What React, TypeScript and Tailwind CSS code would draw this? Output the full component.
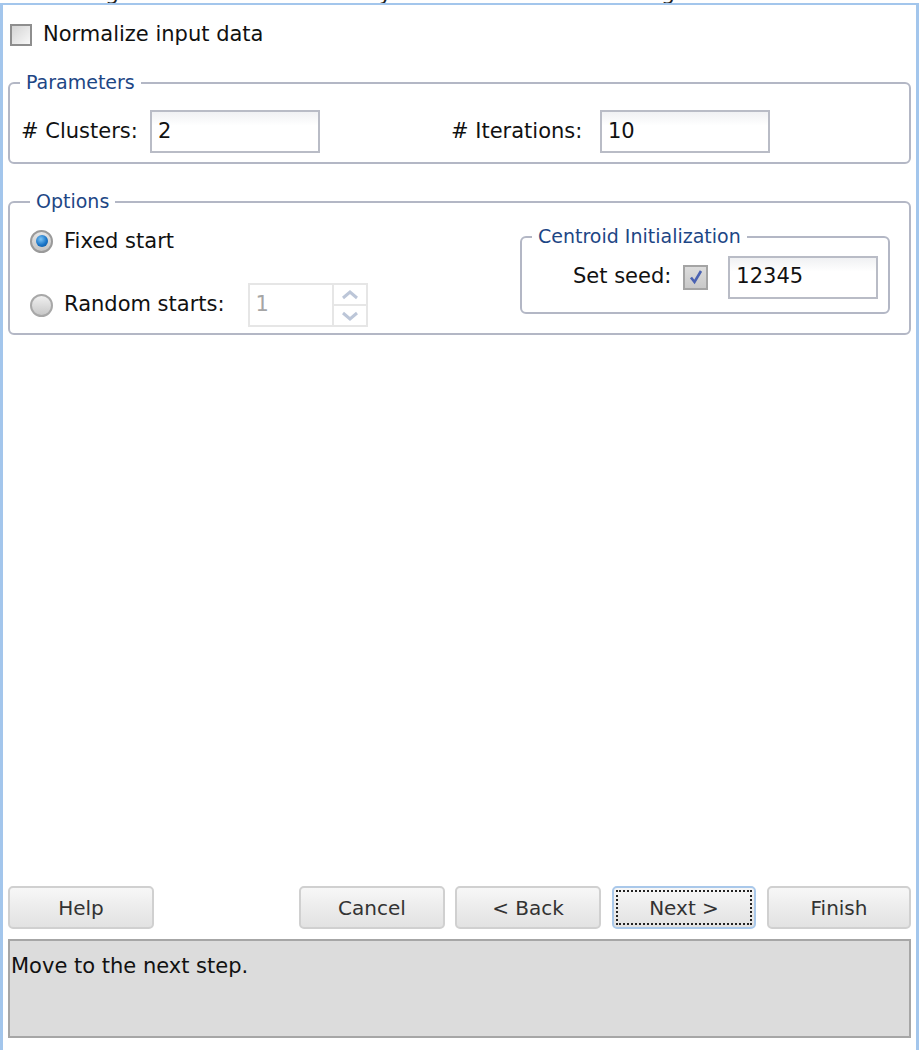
import React from "react";

const font = "font-['DejaVu_Sans','Liberation_Sans',sans-serif]";

function Input({ value, w }: { value: string; w: string }) {
  return (
    <div
      className={`${w} h-[43px] border-2 border-[#b9bcc6] bg-gradient-to-b from-[#f0f1f3] to-white to-[35%] flex items-center px-[6px] text-[21px] text-[#111]`}
    >
      {value}
    </div>
  );
}

function Group({
  label,
  className,
  labelClass,
  children,
}: {
  label: string;
  className?: string;
  labelClass?: string;
  children: React.ReactNode;
}) {
  return (
    <div className={`relative border-2 border-[#b3b7c5] rounded-[6px] ${className ?? ""}`}>
      <div
        className={`absolute -top-[14px] ${labelClass ?? "left-[10px]"} bg-white px-[6px] text-[19px] leading-[24px] text-[#1d4685]`}
      >
        {label}
      </div>
      {children}
    </div>
  );
}

function Button({
  label,
  focused,
  className,
}: {
  label: string;
  focused?: boolean;
  className: string;
}) {
  return (
    <div
      className={`${className} h-[43px] rounded-[5px] border-2 ${
        focused ? "border-[#a9c8ea]" : "border-[#d0d0d0]"
      } bg-gradient-to-b from-[#f7f7f7] via-[#ececec] to-[#e2e2e2] flex items-center justify-center p-[2px]`}
    >
      <div
        className={`w-full h-full flex items-center justify-center text-[20px] text-[#333] ${
          focused ? "border-2 border-dotted border-[#222]" : ""
        }`}
      >
        {label}
      </div>
    </div>
  );
}

export default function App() {
  return (
    <div className={`w-[919px] h-[1050px] bg-white overflow-hidden flex flex-col ${font}`}>
      <div className="h-[3px] overflow-hidden flex text-[22px] leading-[22px] text-[#222]">
        <span className="ml-[105px] -mt-[18px]">g</span>
        <span className="ml-[260px] -mt-[18px]">y</span>
        <span className="ml-[269px] -mt-[18px]">g</span>
      </div>
      <div className="flex-1 flex flex-col border-t-2 border-l-[3px] border-r-[3px] border-[#a3c6ec] px-[5px]">
        <div className="flex items-center mt-[14px] ml-[2px] gap-[11px]">
          <div className="w-[22px] h-[22px] border-2 border-[#8e8e8e] bg-gradient-to-br from-[#d4d4d4] to-[#f8f8f8]" />
          <span className="text-[21px] text-[#111]">Normalize input data</span>
        </div>

        <Group label="Parameters" className="mt-[31px] h-[82px] w-[903px]">
          <div className="flex items-center h-full pt-[18px] pl-[11px]">
            <span className="text-[21px] text-[#111] w-[129px]">#&nbsp;Clusters:</span>
            <Input value="2" w="w-[170px]" />
            <span className="text-[21px] text-[#111] ml-[131px] w-[149px]">#&nbsp;Iterations:</span>
            <Input value="10" w="w-[170px]" />
          </div>
        </Group>

        <Group label="Options" labelClass="left-[20px]" className="mt-[37px] h-[134px] w-[903px]">
          <div className="flex h-full">
            <div className="flex flex-col pl-[20px] pt-[23px]">
              <div className="flex items-center gap-[11px]">
                <div className="w-[23px] h-[23px] rounded-full border-2 border-[#9a9a9a] bg-gradient-to-b from-[#e6e6e6] to-[#c4c4c4] flex items-center justify-center">
                  <div className="w-[12px] h-[12px] rounded-full bg-[radial-gradient(circle_at_40%_35%,#7cc4f4,#1a75c8_55%,#0b4f93)]" />
                </div>
                <span className="text-[21px] text-[#111]">Fixed start</span>
              </div>
              <div className="flex items-center gap-[11px] mt-[26px]">
                <div className="w-[23px] h-[23px] rounded-full border-2 border-[#a8a8a8] bg-gradient-to-b from-[#f0f0f0] to-[#c8c8c8]" />
                <span className="text-[21px] text-[#111]">Random starts:</span>
                <div className="ml-[12px] w-[120px] h-[44px] border-2 border-[#e6e6e6] flex">
                  <div className="flex-1 flex items-center px-[6px] text-[21px] text-[#a5a5a5]">1</div>
                  <div className="w-[34px] border-l-2 border-[#e6e6e6] flex flex-col">
                    <div className="flex-1 flex items-center justify-center border-b-2 border-[#e6e6e6]">
                      <svg width="18" height="10" viewBox="0 0 18 10">
                        <path d="M2 8 L9 2 L16 8" fill="none" stroke="#bcc6d8" strokeWidth="3" />
                      </svg>
                    </div>
                    <div className="flex-1 flex items-center justify-center">
                      <svg width="18" height="10" viewBox="0 0 18 10">
                        <path d="M2 2 L9 8 L16 2" fill="none" stroke="#bcc6d8" strokeWidth="3" />
                      </svg>
                    </div>
                  </div>
                </div>
              </div>
            </div>
            <div className="ml-auto mr-[19px] mt-[33px]">
              <Group label="Centroid Initialization" className="w-[370px] h-[78px]">
                <div className="flex items-center h-full pt-[5px] pl-[51px]">
                  <span className="text-[21px] text-[#111]">Set seed:</span>
                  <div className="ml-[12px] w-[25px] h-[25px] border-2 border-[#a4a4a4] bg-gradient-to-b from-[#dcdcdc] to-[#c9c9c9] flex items-center justify-center">
                    <svg width="16" height="16" viewBox="0 0 16 16">
                      <path d="M3 8.5 L6.5 13 L13 2" fill="none" stroke="#4a62b2" strokeWidth="2.6" />
                    </svg>
                  </div>
                  <div className="ml-[20px]">
                    <Input value="12345" w="w-[150px]" />
                  </div>
                </div>
              </Group>
            </div>
          </div>
        </Group>

        <div className="flex-1" />

        <div className="flex items-center">
          <Button label="Help" className="w-[146px]" />
          <Button label="Cancel" className="w-[146px] ml-auto" />
          <Button label="< Back" className="w-[146px] ml-[10px]" />
          <Button label="Next >" className="w-[144px] ml-[11px]" focused />
          <Button label="Finish" className="w-[144px] ml-[11px]" />
        </div>

        <div className="mt-[10px] mb-[12px] h-[99px] border-2 border-[#a6a6a6] bg-[#dcdcdc] px-[1px] pt-[12px] text-[21px] text-[#111] leading-[26px]">
          Move to the next step.
        </div>
      </div>
    </div>
  );
}
